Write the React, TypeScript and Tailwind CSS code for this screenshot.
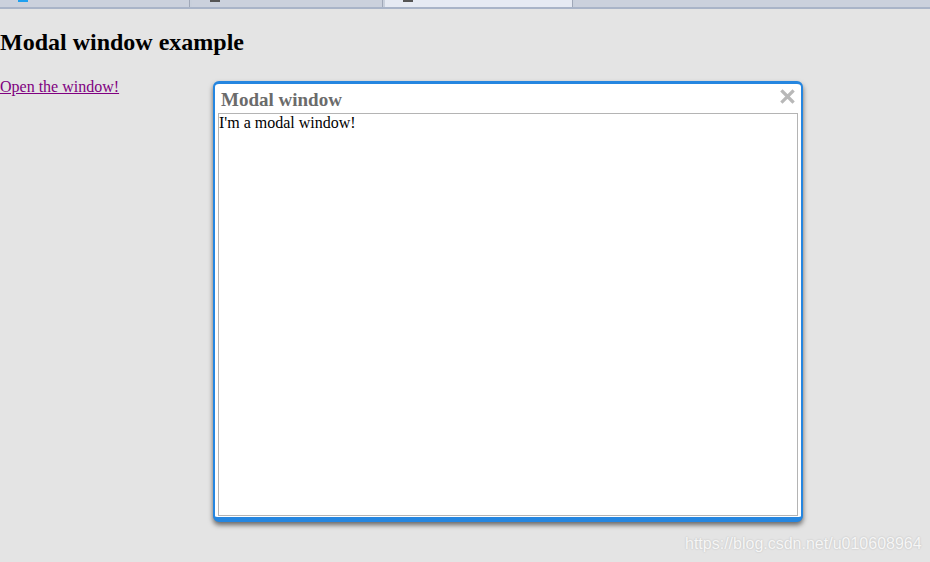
export default function App() {
  const tabs = [
    { w: "w-[190px]", icon: "bg-[#1ea0f0]", active: false },
    { w: "w-[191px]", icon: "bg-[#555]", active: false },
    { w: "w-[188px]", icon: "bg-[#555]", active: true },
  ];

  return (
    <div className="relative w-[930px] h-[562px] bg-[#e4e4e4] overflow-hidden font-['Liberation_Serif',serif] text-black">
      {/* browser tab strip */}
      <div className="flex h-[9px] border-b-2 border-[#a9b4c8] bg-[#c9d0dc]">
        {tabs.map((t, i) => (
          <div
            key={i}
            className={`relative h-[7px] mr-[2px] border-r border-[#a0a8b8] ${t.w} ${t.active ? "bg-[#e6eaf3]" : "bg-[#cbd1dd]"}`}
          >
            <div className={`absolute left-[18px] top-0 w-[10px] h-[2px] ${t.icon}`} />
          </div>
        ))}
        <div className="flex-1 h-[7px] bg-[#cbd1dd]" />
      </div>

      <h2 className="text-[24px] font-bold leading-[28px] mt-[19px] ml-0">Modal window example</h2>
      <a href="#" className="block mt-[22px] text-[16px] leading-[18px] text-[#800080] underline w-fit">
        Open the window!
      </a>

      {/* modal */}
      <div className="absolute left-[213px] top-[81px] w-[590px] h-[441px] rounded-[6px] bg-white border-[#2586e0] border-t-[3px] border-x-2 border-b-[5px] shadow-[0_3px_5px_rgba(0,0,0,0.55)] flex flex-col">
        <div className="flex items-center justify-between h-[29px] pl-[6px] pr-[6px]">
          <span className="text-[19px] font-bold text-[#6b6b6b] mt-[3px]">Modal window</span>
          <svg width="15" height="15" viewBox="0 0 15 15" className="-mt-[5px]">
            <path d="M2.5 2.5 L12.5 12.5 M12.5 2.5 L2.5 12.5" stroke="#b8b8b8" strokeWidth="3.2" strokeLinecap="square" />
          </svg>
        </div>
        <div className="flex-1 mx-[3px] mb-[1px] border border-[#b4b4b4] text-[16px] leading-[18px]">
          I'm a modal window!
        </div>
      </div>

      <div className="absolute left-[685px] top-[532px] text-[16px] font-['Liberation_Sans',sans-serif] text-[#f6f6f6] [text-shadow:0_0_2px_rgba(0,0,0,0.2)]">
        https://blog.csdn.net/u010608964
      </div>
    </div>
  );
}
